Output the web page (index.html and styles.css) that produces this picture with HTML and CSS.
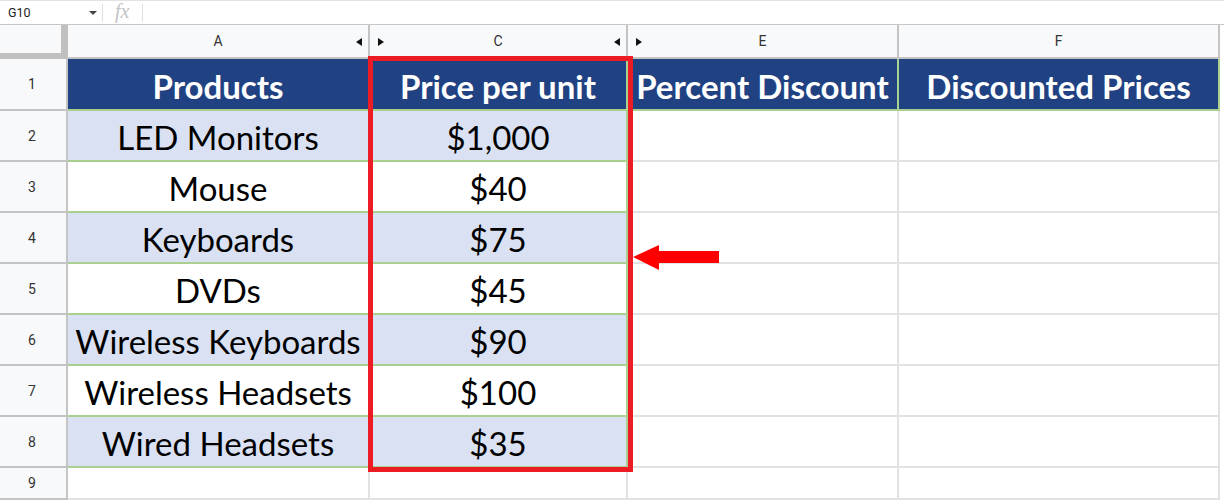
FILE: index.html
```html
<!DOCTYPE html>
<html>
<head>
<meta charset="utf-8">
<link rel="stylesheet" href="styles.css">
</head>
<body>
<div class="formula-bar">
  <div class="name-box">G10</div>
  <div class="name-caret"></div>
  <div class="fb-sep"></div>
  <div class="fx">fx</div>
  <div class="fb-sep"></div>
</div>
<div class="sheet">
  <div class="corner"><div class="corner-inner"></div></div>
  <div class="colhdr">A<span class="hide-l right"></span></div>
  <div class="colhdr"><span class="hide-r left"></span>C<span class="hide-l right"></span></div>
  <div class="colhdr"><span class="hide-r left"></span>E</div>
  <div class="colhdr">F</div>
  <div class="filler"></div>

  <div class="rowhdr">1</div>
  <div class="cell hdr">Products</div>
  <div class="cell hdr">Price per unit</div>
  <div class="cell hdr">Percent Discount</div>
  <div class="cell hdr">Discounted Prices</div>
  <div class="filler"></div>

  <div class="rowhdr">2</div>
  <div class="cell tbl alt">LED Monitors</div>
  <div class="cell tbl alt">$1,000</div>
  <div class="cell grid"></div>
  <div class="cell grid"></div>
  <div class="filler"></div>

  <div class="rowhdr">3</div>
  <div class="cell tbl">Mouse</div>
  <div class="cell tbl">$40</div>
  <div class="cell grid"></div>
  <div class="cell grid"></div>
  <div class="filler"></div>

  <div class="rowhdr">4</div>
  <div class="cell tbl alt">Keyboards</div>
  <div class="cell tbl alt">$75</div>
  <div class="cell grid"></div>
  <div class="cell grid"></div>
  <div class="filler"></div>

  <div class="rowhdr">5</div>
  <div class="cell tbl">DVDs</div>
  <div class="cell tbl">$45</div>
  <div class="cell grid"></div>
  <div class="cell grid"></div>
  <div class="filler"></div>

  <div class="rowhdr">6</div>
  <div class="cell tbl alt">Wireless Keyboards</div>
  <div class="cell tbl alt">$90</div>
  <div class="cell grid"></div>
  <div class="cell grid"></div>
  <div class="filler"></div>

  <div class="rowhdr">7</div>
  <div class="cell tbl">Wireless Headsets</div>
  <div class="cell tbl">$100</div>
  <div class="cell grid"></div>
  <div class="cell grid"></div>
  <div class="filler"></div>

  <div class="rowhdr">8</div>
  <div class="cell tbl alt">Wired Headsets</div>
  <div class="cell tbl alt">$35</div>
  <div class="cell grid"></div>
  <div class="cell grid"></div>
  <div class="filler"></div>

  <div class="rowhdr small">9</div>
  <div class="cell grid"></div>
  <div class="cell grid"></div>
  <div class="cell grid"></div>
  <div class="cell grid"></div>
  <div class="filler"></div>

  <div class="highlight"></div>
  <svg class="arrow" width="90" height="28" viewBox="0 0 90 28">
    <polygon points="0,13 26,1 26,7 86,7 86,19 26,19 26,26" fill="#ff0000"/>
  </svg>
</div>
</body>
</html>
```
FILE: styles.css
```css
* { box-sizing: border-box; }
html, body { margin: 0; padding: 0; background: #fff; }
body {
  width: 1224px;
  height: 501px;
  overflow: hidden;
  font-family: Roboto, Arial, "Liberation Sans", sans-serif;
}

.formula-bar {
  height: 25px;
  border-top: 1px solid #e3e3e3;
  border-bottom: 1px solid #c7c7c7;
  display: flex;
  align-items: center;
  padding-left: 8px;
}
.name-box {
  width: 81px;
  font-size: 12.5px;
  color: #222;
  font-family: Roboto, Arial, sans-serif;
}
.name-caret {
  width: 0; height: 0;
  border-left: 4px solid transparent;
  border-right: 4px solid transparent;
  border-top: 4px solid #444;
  margin-right: 5px;
}
.fb-sep {
  width: 1px;
  height: 18px;
  background: #e0e0e0;
}
.fx {
  font-family: "Liberation Serif", "DejaVu Serif", serif;
  font-style: italic;
  font-size: 20px;
  color: #c4c4c4;
  margin: 0 13px 0 12px;
  line-height: 1;
  padding-bottom: 3px;
}

.sheet {
  position: relative;
  display: grid;
  grid-template-columns: 68px 302px 258px 271px 321px 1fr;
  grid-template-rows: 34px 52px repeat(7, 51px) 32px;
}

.corner {
  background: #c0c0c0;
  padding-right: 7px;
  padding-bottom: 6px;
}
.corner-inner {
  width: 61px;
  height: 28px;
  background: #f8f9fa;
}

.colhdr {
  position: relative;
  background: #f8f9fa;
  border-right: 2px solid #c4c4c4;
  border-bottom: 2px solid #c4c4c4;
  display: flex;
  align-items: center;
  justify-content: center;
  font-size: 14px;
  color: #333;
  padding-bottom: 1px;
}
.hide-l, .hide-r {
  position: absolute;
  top: 13px;
  width: 0; height: 0;
  border-top: 4px solid transparent;
  border-bottom: 4px solid transparent;
}
.hide-l { border-right: 6px solid #111; }
.hide-r { border-left: 6px solid #111; }
.hide-l.right { right: 6px; }
.hide-r.left { left: 8px; }

.rowhdr {
  background: #f8f9fa;
  border-right: 2px solid #c4c4c4;
  border-bottom: 2px solid #c4c4c4;
  display: flex;
  align-items: center;
  justify-content: center;
  font-size: 14px;
  color: #333;
  padding-right: 2px;
}

.cell {
  display: flex;
  align-items: center;
  justify-content: center;
  white-space: nowrap;
  font-family: Lato, "Noto Sans", sans-serif;
  font-size: 33px;
  color: #000;
  padding-top: 2px;
  overflow: visible;
}
.hdr {
  background: #214282;
  color: #fff;
  font-weight: 700;
  font-size: 33px;
  padding-top: 3px;
  border-right: 2px solid #a9d08e;
  border-bottom: 2px solid #a9d08e;
}
.tbl {
  background: #fff;
  border-right: 2px solid #a9d08e;
  border-bottom: 2px solid #a9d08e;
}
.tbl.alt { background: #d9e1f2; }
.grid {
  background: #fff;
  border-right: 2px solid #e2e2e2;
  border-bottom: 2px solid #e2e2e2;
}
.filler { background: #fff; }

.highlight {
  position: absolute;
  left: 368px;
  top: 31px;
  width: 265px;
  height: 416px;
  border: 5px solid #ed1c24;
  pointer-events: none;
}
.arrow {
  position: absolute;
  left: 633px;
  top: 219px;
}
```
